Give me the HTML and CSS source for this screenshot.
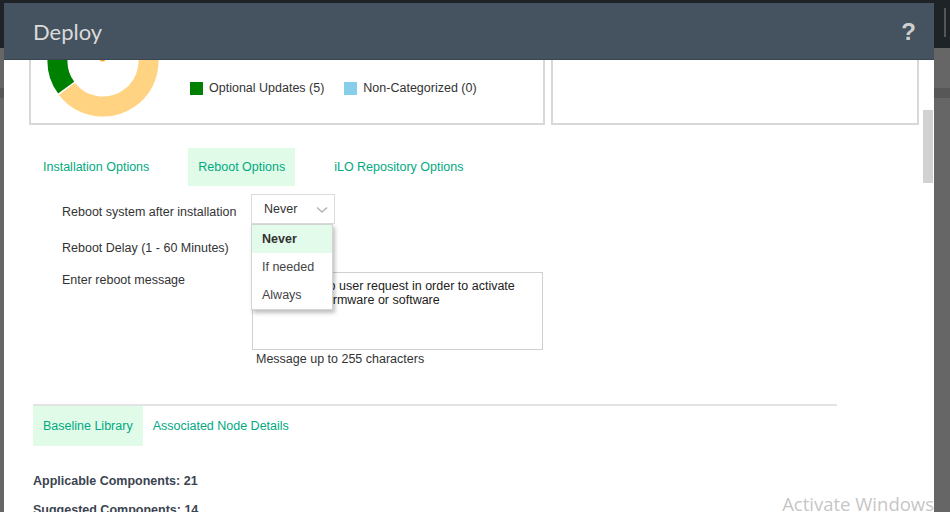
FILE: index.html
```html
<!DOCTYPE html>
<html lang="en">
<head>
    <meta charset="UTF-8">
    <title>Deploy</title>
    <link rel="stylesheet" href="styles.css">
</head>
<body>
    <div class="app">
        <div class="app-top"><span class="app-divider"></span></div>
        <div class="app-band"></div>
    </div>

    <div class="modal">
        <div class="modal-header">
            <h1 class="modal-title">Deploy</h1>
            <span class="help">?</span>
        </div>

        <div class="modal-body">
            <div class="content">
                <div class="summary">
                    <div class="card chart-card">
                        <svg class="donut" width="116" height="116" viewBox="0 0 116 116">
                            <circle cx="58" cy="58" r="45.5" fill="none" stroke="#ffd382" stroke-width="20"
                                    stroke-dasharray="176.3 400" transform="rotate(-80 58 58)"/>
                            <circle cx="58" cy="58" r="45.5" fill="none" stroke="#008000" stroke-width="20"
                                    stroke-dasharray="84 400" transform="rotate(144 58 58)"/>
                            <circle cx="57.5" cy="55.5" r="3" fill="#f5a623"/>
                        </svg>
                        <div class="legend">
                            <span class="legend-item"><i class="swatch optional"></i>Optional Updates (5)</span>
                            <span class="legend-item"><i class="swatch other"></i>Non-Categorized (0)</span>
                        </div>
                    </div>
                    <div class="card info-card"></div>
                </div>

                <div class="tabs">
                    <span class="tab">Installation Options</span>
                    <span class="tab active">Reboot Options</span>
                    <span class="tab">iLO Repository Options</span>
                </div>

                <div class="form">
                    <div class="row">
                        <label class="label first">Reboot system after installation</label>
                        <div class="select-wrap">
                            <div class="select">
                                <span>Never</span>
                                <svg class="chevron" width="12" height="8" viewBox="0 0 12 8">
                                    <path d="M1 1.5 L6 6 L11 1.5" fill="none" stroke="#b5b5b5" stroke-width="1.6"/>
                                </svg>
                            </div>
                            <ul class="menu">
                                <li class="selected">Never</li>
                                <li>If needed</li>
                                <li>Always</li>
                            </ul>
                        </div>
                    </div>
                    <div class="row delay">
                        <label class="label">Reboot Delay (1 - 60 Minutes)</label>
                        <input class="delay-input" type="text" value="5">
                    </div>
                    <div class="row">
                        <label class="label">Enter reboot message</label>
                        <div>
                            <textarea class="message">Reboot due to user request in order to activate
the updated firmware or software</textarea>
                            <div class="hint">Message up to 255 characters</div>
                        </div>
                    </div>
                </div>

                <div class="details">
                    <div class="tabs flat">
                        <span class="tab active">Baseline Library</span>
                        <span class="tab">Associated Node Details</span>
                    </div>
                    <p class="stat">Applicable Components: 21</p>
                    <p class="stat">Suggested Components: 14</p>
                </div>
            </div>
            <div class="scrollbar"><div class="thumb"></div></div>
        </div>
    </div>

    <div class="watermark">Activate Windows</div>
</body>
</html>
```

FILE: styles.css
```css
html, body {
    margin: 0;
    height: 100%;
    overflow: hidden;
}
body {
    background-color: #666;
    font-family: "Liberation Sans", Arial, sans-serif;
    font-size: 12.5px;
    color: #333;
}
.app-top {
    height: 48px;
    background-color: #1e2327;
    position: relative;
}
.app-divider {
    position: absolute;
    left: 944px;
    top: 8px;
    width: 2px;
    height: 29px;
    background: #555;
}
.app-band {
    margin-top: 40px;
    height: 10px;
    background-color: #575757;
}

.modal {
    position: absolute;
    left: 4px;
    top: 3px;
    width: 930px;
    bottom: 0;
    background: white;
    display: flex;
    flex-direction: column;
    overflow: hidden;
}
.modal-header {
    height: 56px;
    flex: none;
    background-color: #44535f;
    border-bottom: 1px solid #3a4753;
    display: flex;
    align-items: center;
    justify-content: space-between;
    padding: 0 18px 0 29px;
}
.modal-title {
    margin: 0;
    font-family: Lato, "Open Sans", sans-serif;
    font-weight: 400;
    font-size: 22px;
    color: #dadada;
}
.help {
    font-family: "Liberation Sans", Arial, sans-serif;
    font-weight: bold;
    font-size: 24px;
    color: #cfcfcf;
    padding-top: 1px;
}

.modal-body {
    flex: 1;
    display: flex;
    overflow: hidden;
}
.content {
    flex: 1;
    padding-left: 29px;
}
.scrollbar {
    width: 11px;
    flex: none;
}
.thumb {
    margin: 50px 1px 0 0;
    width: 10px;
    height: 73px;
    background-color: #d2d2d2;
}

/* summary cards (scrolled up) */
.summary {
    display: flex;
    gap: 6px;
    margin: -95px 4px 0 -4px;
}
.card {
    height: 160px;
    border: 2px solid #d8d8d8;
    box-sizing: border-box;
}
.chart-card {
    width: 516px;
    flex: none;
    display: flex;
    align-items: flex-end;
    padding: 0 0 0 14px;
}
.donut {
    margin-bottom: 4px;
    flex: none;
}
.legend {
    display: flex;
    gap: 20px;
    margin: 0 0 27px 29px;
}
.legend-item {
    display: flex;
    align-items: center;
    gap: 6px;
    line-height: 16px;
}
.swatch {
    width: 13px;
    height: 13px;
}
.swatch.optional { background-color: #008000; }
.swatch.other { background-color: #87ceeb; }
.info-card {
    flex: 1;
}

/* tabs */
.tabs {
    display: flex;
    gap: 29px;
    margin-top: 23px;
}
.tab {
    height: 38px;
    line-height: 38px;
    padding: 0 10px;
    color: #01a982;
}
.tab.active {
    background-color: #e1fbe9;
}
.tabs.flat {
    gap: 0;
    margin-top: 0;
}
.tabs.flat .tab {
    height: 40px;
    line-height: 41px;
}

/* reboot form */
.form {
    margin-top: 8px;
    padding-left: 29px;
}
.row {
    display: flex;
    margin-bottom: 10px;
}
.label {
    width: 189px;
    flex: none;
    line-height: 16px;
}
.label.first {
    padding-top: 10px;
}
.row.delay {
    height: 28px;
    align-items: center;
}
.select-wrap {
    position: relative;
}
.select {
    height: 28px;
    border: 1px solid #dcdcdc;
    display: flex;
    align-items: center;
    justify-content: space-between;
    padding: 0 6px 0 12px;
    width: 64px;
}
.chevron {
    margin-top: 1px;
}
.menu {
    position: absolute;
    top: 30px;
    left: 0;
    width: 80px;
    margin: 0;
    padding: 0;
    list-style: none;
    background: white;
    border: 1px solid #d4d4d4;
    box-shadow: 2px 3px 4px rgba(0, 0, 0, 0.25);
    z-index: 2;
}
.menu li {
    height: 28px;
    line-height: 28px;
    padding-left: 10px;
    color: #444;
}
.menu li.selected {
    background-color: #e3fbea;
    font-weight: bold;
    color: #333;
}
.delay-input {
    width: 60px;
    height: 26px;
    border: 1px solid #ccc;
    padding: 0 6px;
    font: inherit;
}
.message {
    display: block;
    width: 291px;
    height: 78px;
    box-sizing: border-box;
    margin-left: 1px;
    border: 1px solid #d0d0d0;
    padding: 6px 4px;
    font: inherit;
    line-height: 14px;
    color: #222;
    resize: none;
    overflow: hidden;
    white-space: pre;
}
.hint {
    line-height: 16px;
    padding: 1px 0 0 5px;
}

/* baseline section */
.details {
    width: 804px;
    margin-top: 37px;
    border-top: 2px solid #e3e3e3;
}
.stat {
    margin: 27px 0 0;
    line-height: 16px;
    font-weight: bold;
    color: #3b4450;
}
.stat + .stat {
    margin-top: 13px;
}

.watermark {
    position: absolute;
    right: 16px;
    top: 496px;
    font-family: "Open Sans", sans-serif;
    font-size: 18.5px;
    line-height: 16px;
    color: rgba(190, 190, 190, 0.9);
}
```
